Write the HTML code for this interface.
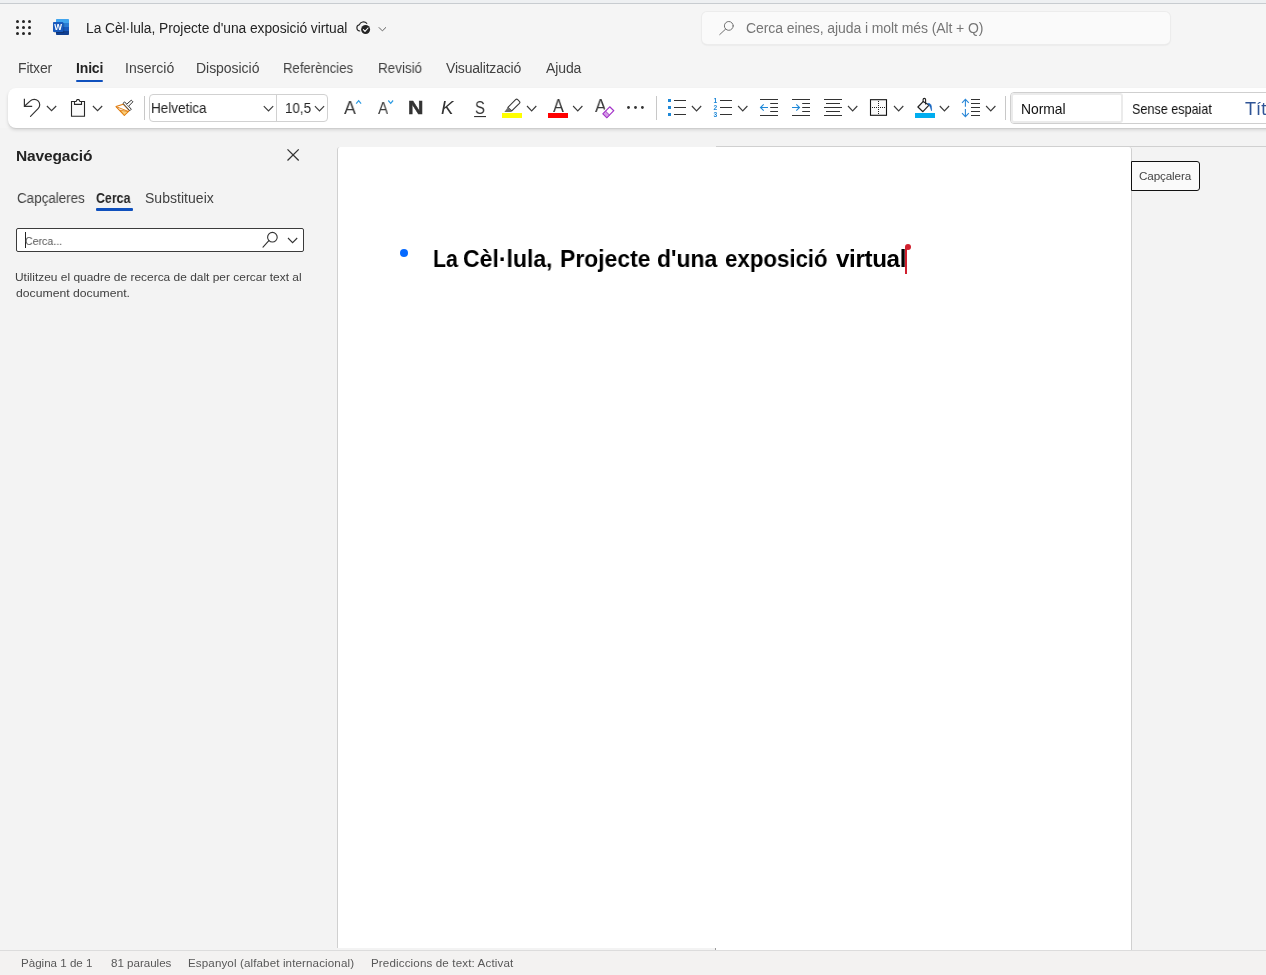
<!DOCTYPE html>
<html lang="ca">
<head>
<meta charset="utf-8">
<title>La Cèl·lula, Projecte d'una exposició virtual</title>
<style>
*{box-sizing:border-box;margin:0;padding:0}
html,body{width:1266px;height:975px;overflow:hidden;background:#f5f5f5;font-family:"Liberation Sans",sans-serif;color:#242424}
.abs{position:absolute}
.t{position:absolute;white-space:nowrap;line-height:1;will-change:transform}
svg{position:absolute;overflow:visible;will-change:transform;z-index:2}
#topstrip{left:0;top:0;width:1266px;height:3px;background:#eef0f2}
#topline{left:0;top:3px;width:1266px;height:1px;background:#c8ccd0}
#search{left:702px;top:12px;width:468px;height:32px;background:#fafafa;border-radius:5px;box-shadow:0 0 0 1px #ececec,0 1px 2px rgba(0,0,0,.12)}
#ribbon{left:8px;top:88px;width:1300px;height:40px;background:#fff;border-radius:8px;box-shadow:0 2px 3.6px rgba(0,0,0,.13),0 1px 1px rgba(0,0,0,.06)}
#work{left:0;top:128px;width:1266px;height:822px;background:#f3f3f3}
#pgline{left:716px;top:146px;width:550px;height:1px;background:#d0d0d0}
#page{left:337px;top:147px;width:795px;height:803px;background:#fff;border-left:1px solid #d0d0d0;border-right:1px solid #d0d0d0;border-top-left-radius:3px;border-top-right-radius:3px}
#hband{left:337px;top:948px;width:379px;height:2px;background:#f3f3f3;border-right:1px solid #9a9a9a}
#sline{left:0;top:950px;width:1266px;height:1px;background:#dcdcdc}
#status{left:0;top:951px;width:1266px;height:24px;background:#f3f2f1}
#tabul{left:76px;top:80px;width:27px;height:2px;background:#0f50bd;border-radius:1px}
#navul{left:96px;top:208px;width:37px;height:3px;background:#0f50bd;border-radius:1px}
#fbox{left:149px;top:94px;width:179px;height:28px;border:1px solid #d1d1d1;border-radius:4px;background:#fff}
#fdiv{left:276px;top:95px;width:1px;height:26px;background:#d1d1d1}
.sep{width:1px;height:24px;top:96px;background:#c8c8c8}
#gal{left:1010px;top:92px;width:300px;height:32px;border:1px solid #cfcfcf;border-radius:4px;background:#fff}
#galsel{left:1011px;top:93px;width:112px;height:30px;border:2px solid #ebebeb;border-radius:3px;background:#fff}
#ninput{left:16px;top:228px;width:288px;height:24px;border:1px solid #3b3b3b;border-radius:2px;background:#fff}
#ncaret{left:25px;top:232px;width:1px;height:16px;background:#222}
#capbox{left:1131px;top:161px;width:69px;height:30px;border:1px solid #111;border-left:1px solid #111;border-radius:0 3px 3px 0;background:#fafafa}
#bullet{left:400px;top:248.900px;width:8.100px;height:8.100px;border-radius:50%;background:#0469ff}
#cur{left:904.9px;top:247px;width:1.7px;height:26.700px;background:#d0202f}
#curdot{left:905px;top:244px;width:6px;height:6px;border-radius:50%;background:#d0202f}
</style>
</head>
<body>
<div class="abs" id="topstrip"></div>
<div class="abs" id="topline"></div>
<div class="abs" id="search"></div>
<div class="abs" id="tabul"></div>
<div class="abs" id="work"></div>
<div class="abs" id="ribbon"></div>
<div class="abs" id="fbox"></div>
<div class="abs" id="fdiv"></div>
<div class="abs sep" style="left:144px"></div>
<div class="abs sep" style="left:656px"></div>
<div class="abs sep" style="left:1005px"></div>
<div class="abs" id="gal"></div>
<div class="abs" id="galsel"></div>
<div class="abs" id="pgline"></div>
<div class="abs" id="page"></div>
<div class="abs" id="hband"></div>
<div class="abs" id="sline"></div>
<div class="abs" id="status"></div>
<div class="abs" id="navul"></div>
<div class="abs" id="ninput"></div>
<div class="abs" id="ncaret"></div>
<div class="abs" id="capbox"></div>
<div class="abs" id="bullet"></div>
<div class="abs" id="cur"></div>
<div class="abs" id="curdot"></div>

<svg width="1266" height="975" viewBox="0 0 1266 975" style="left:0;top:0" fill="none">
<!-- app launcher -->
<g fill="#242424">
<circle cx="17.5" cy="21.5" r="1.5"/><circle cx="23.5" cy="21.5" r="1.5"/><circle cx="29.5" cy="21.5" r="1.5"/>
<circle cx="17.5" cy="27.5" r="1.5"/><circle cx="23.5" cy="27.5" r="1.5"/><circle cx="29.5" cy="27.5" r="1.5"/>
<circle cx="17.5" cy="33.5" r="1.5"/><circle cx="23.5" cy="33.5" r="1.5"/><circle cx="29.5" cy="33.5" r="1.5"/>
</g>
<!-- word icon -->
<g>
<path d="M57 19h11.2a.8.8 0 0 1 .8.8V23H56v-3.200a.8.800 0 0 1 1-.8z" fill="#41a5ee"/>
<rect x="56" y="23" width="13" height="4" fill="#2b7cd3"/>
<rect x="56" y="27" width="13" height="4" fill="#185abd"/>
<path d="M56 31h13v3.200a.8.800 0 0 1-.8.800H56.800a.8.800 0 0 1-.8-.8z" fill="#103f91"/>
<rect x="54" y="23" width="10.300" height="10" rx=".8" fill="#000" opacity=".18"/>
<rect x="53" y="22" width="10.300" height="10" rx=".8" fill="#185abd"/>
<text x="58.150" y="30.200" font-family="Liberation Sans, sans-serif" font-weight="700" font-size="8.200" fill="#fff" text-anchor="middle">W</text>
</g>
<!-- cloud saved -->
<g stroke="#242424" stroke-width="1.100" stroke-linecap="round">
<path d="M366.800 23.300A4.500 4.500 0 0 0 359.300 24.700A3.200 3.200 0 0 0 359.800 31"/>
</g>
<circle cx="365.600" cy="29.500" r="4.500" fill="#242424"/>
<path d="M363.400 29.700l1.600 1.600l3-3.300" stroke="#fff" stroke-width="1.100" stroke-linecap="round" stroke-linejoin="round"/>
<path d="M378.800 27.300l3.600 3.600l3.600-3.600" stroke="#616161" stroke-width="1" />
<!-- header search icon -->
<g stroke="#707070" stroke-width="1" stroke-linecap="round">
<circle cx="728.800" cy="25.900" r="4.400"/>
<path d="M725.600 29.100L719.700 34.600"/>
</g>
<!-- chevrons ribbon -->
<g stroke="#3b3b3b" stroke-width="1.150">
<path d="M46.900 106l4.650 4.700l4.650-4.700"/>
<path d="M92.900 106l4.650 4.700l4.650-4.700"/>
<path d="M263.800 106.200l4.700 4.800l4.700-4.800"/>
<path d="M314.900 106.200l4.600 4.800l4.600-4.800"/>
<path d="M527 106l4.650 4.800l4.650-4.800"/>
<path d="M573.100 106l4.650 4.800l4.650-4.800"/>
<path d="M691.900 106l4.650 4.800l4.650-4.800"/>
<path d="M738.100 106l4.650 4.800l4.650-4.800"/>
<path d="M848 106l4.650 4.800l4.650-4.800"/>
<path d="M894 106l4.650 4.800l4.650-4.800"/>
<path d="M939.800 106l4.650 4.800l4.650-4.800"/>
<path d="M986.100 106l4.650 4.800l4.650-4.800"/>
</g>
<!-- undo -->
<g stroke="#333" stroke-width="1.200" stroke-linecap="square">
<path d="M24.400 99.300V106.400H31.600"/>
<path d="M25 105.800L30.300 100.900A5.500 5.500 0 0 1 38.100 108.700L30.500 116.300" stroke-linecap="round"/>
</g>
<!-- clipboard -->
<g stroke="#262626" stroke-width="1.100" stroke-linejoin="miter">
<path d="M74.500 101.500H71.500V116.200H84.500V101.500H81.500" fill="#fafafa"/>
<path d="M74.500 104.400V101.500H76.100L77.100 99.600H78.900L79.900 101.500H81.500V104.400Z" fill="#fff"/>
</g>
<!-- format painter -->
<path d="M116 106.600L123.200 104.200L129.300 110.600L124.300 115.300Z" fill="#fff" stroke="#e07b0c" stroke-width="1.100" stroke-linejoin="round"/>
<path d="M120.200 110.200L128.400 111.500L124.300 115.200Z" fill="#f9cf7a" stroke="#e07b0c" stroke-width=".8" stroke-linejoin="round"/>
<path d="M116.300 106.700L128.200 111.400" stroke="#e07b0c" stroke-width=".9"/>
<path d="M123 103.400L124.600 101.900L131.300 109.200L129.800 110.700Z" fill="#fff" stroke="#333" stroke-width="1" stroke-linejoin="round"/>
<path d="M126.700 104.200L131.300 100.200L132.900 101.800L128.600 106.200" fill="#fff" stroke="#333" stroke-width="1" stroke-linejoin="round"/>
<!-- grow / shrink font carets -->
<path d="M356.200 103.700l2.450-3l2.450 3" stroke="#2b9be3" stroke-width="1.200"/>
<path d="M388.300 100.500l2.400 2.900l2.400-2.900" stroke="#2b9be3" stroke-width="1.200"/>
<!-- underline S line -->
<rect x="474.100" y="116" width="11.900" height="1.100" fill="#333"/>
<!-- highlighter -->
<rect x="502" y="113" width="20" height="5" fill="#ffff00"/>
<path d="M507.900 107.300L515.600 99.700A1.500 1.500 0 0 1 517.700 99.700L519.400 101.300A1.500 1.500 0 0 1 519.400 103.400L511.700 110.900Z" stroke="#3b3b3b" stroke-width="1.100" fill="#fff"/>
<path d="M507.800 107.200L511.700 110.900L510.800 111.900H504.400Z" fill="#6e6e6e"/>
<!-- font colour -->
<rect x="548" y="113" width="20" height="5" fill="#ff0000"/>
<!-- clear formatting eraser -->
<path d="M609.700 106.800L613.800 110.700L606.900 117.700L602.900 113.800Z" fill="#fff" stroke="#fff" stroke-width="3.400" stroke-linejoin="round"/>
<path d="M609.700 106.800L613.800 110.700L606.900 117.700L602.900 113.800Z" fill="#fff" stroke="#a333c8" stroke-width="1.200" stroke-linejoin="round"/>
<path d="M605.600 111.200L609.500 115L606.900 117.600L603 113.800Z" fill="#d49be6" stroke="#a333c8" stroke-width="1"/>
<!-- more dots -->
<g fill="#333"><circle cx="628.500" cy="107.500" r="1.400"/><circle cx="635.500" cy="107.500" r="1.400"/><circle cx="642.400" cy="107.500" r="1.400"/></g>
<!-- bullets -->
<g fill="#1e88d8"><rect x="668" y="99" width="3" height="3"/><rect x="668" y="106" width="3" height="3"/><rect x="668" y="113" width="3" height="3"/></g>
<g stroke="#333" stroke-width="1.100"><path d="M674 100.500H686M674 107.500H686M674 114.500H686"/></g>
<!-- numbering -->
<g font-family="Liberation Sans, sans-serif" font-weight="700" font-size="6.700" fill="#1e88d8"><text x="713.600" y="102.900">1</text><text x="713.600" y="109.900">2</text><text x="713.600" y="116.900">3</text></g>
<g stroke="#333" stroke-width="1.100"><path d="M720 100.500H732M720 107.500H732M720 114.500H732"/></g>
<!-- outdent -->
<g stroke="#333" stroke-width="1.100"><path d="M760 99.500H778M770.200 103.500H778M770.200 107.500H778M770.200 111.500H778M760 115.500H778"/></g>
<path d="M768 107.500H760.600M763.700 104.300L760.500 107.500L763.700 110.700" stroke="#1e88d8" stroke-width="1.100"/>
<!-- indent -->
<g stroke="#333" stroke-width="1.100"><path d="M792 99.500H810M802.200 103.500H810M802.200 107.500H810M802.200 111.500H810M792 115.500H810"/></g>
<path d="M792 107.500H799.400M796.300 104.300L799.500 107.500L796.300 110.700" stroke="#1e88d8" stroke-width="1.100"/>
<!-- align -->
<g stroke="#333" stroke-width="1.100"><path d="M824 99.500H842M826 103.500H840M824 107.500H842M826 111.500H840M824 115.500H842"/></g>
<!-- borders -->
<rect x="870.500" y="99.700" width="16" height="15.600" stroke="#111" stroke-width="1.100" fill="#fafafa"/>
<path d="M878.500 101V114.500M872 107.500H885.500" stroke="#222" stroke-width="1" stroke-dasharray="1 1"/>
<!-- shading -->
<rect x="915" y="113" width="20" height="5" fill="#00adef"/>
<path d="M917.900 107L923.100 101.600L929 105.100L922.900 111.700Z" fill="#fafafa" stroke="#222" stroke-width="1.200" stroke-linejoin="round"/>
<path d="M923.100 101.900V99.600A1.250 1.250 0 0 1 925.600 99.600V104.500" stroke="#222" stroke-width="1.100"/>
<path d="M927.600 103.600C930.800 102.600 931.900 105.500 931.500 110.800C930.600 108.200 930.200 105.600 927.600 103.600Z" fill="#1565c0" stroke="#1565c0" stroke-width=".6"/>
<!-- line spacing -->
<g stroke="#2b88d8" stroke-width="1.100"><path d="M965.400 99.300V106.800M962 102.800L965.400 99.300L968.800 102.800M965.400 109V116.600M962 113.100L965.400 116.600L968.800 113.100"/></g>
<g stroke="#333" stroke-width="1.100"><path d="M971 99.500H980M971 103.500H980M971 107.500H980M971 111.500H980M971 115.500H980"/></g>
<!-- nav close -->
<path d="M287.500 149.400L298.700 160.500M298.700 149.400L287.500 160.500" stroke="#333" stroke-width="1.300"/>
<!-- nav search icon -->
<g stroke="#333" stroke-width="1.100" stroke-linecap="round"><circle cx="272.400" cy="237.200" r="4.800"/><path d="M268.900 240.700L263 247.200"/></g>
<path d="M288 238l4.600 4.700l4.600-4.700" stroke="#333" stroke-width="1.100"/>
</svg>

<div class="t" id="title" style="left:85.60px;top:22.4px;font-size:13.8px;font-weight:400;color:#242424;letter-spacing:-0.045px;">La Cèl·lula, Projecte d'una exposició virtual</div>
<div class="t" id="sph" style="left:746.00px;top:20.7px;font-size:14px;font-weight:400;color:#767676;letter-spacing:-0.089px;">Cerca eines, ajuda i molt més (Alt + Q)</div>
<div class="t" id="tb1" style="left:18.00px;top:60.9px;font-size:14px;font-weight:400;color:#424242;letter-spacing:-0.152px;">Fitxer</div>
<div class="t" id="tb2" style="left:76.40px;top:60.9px;font-size:14px;font-weight:700;color:#242424;letter-spacing:-0.156px;">Inici</div>
<div class="t" id="tb3" style="left:124.80px;top:60.9px;font-size:14px;font-weight:400;color:#424242;letter-spacing:0.032px;">Inserció</div>
<div class="t" id="tb4" style="left:196.20px;top:60.9px;font-size:14px;font-weight:400;color:#424242;letter-spacing:-0.043px;">Disposició</div>
<div class="t" id="tb5" style="left:283.20px;top:60.9px;font-size:14px;font-weight:400;color:#424242;letter-spacing:0.000px;transform:scaleX(0.9372);transform-origin:0 0;">Referències</div>
<div class="t" id="tb6" style="left:378.10px;top:60.9px;font-size:14px;font-weight:400;color:#424242;letter-spacing:0.000px;transform:scaleX(0.9607);transform-origin:0 0;">Revisió</div>
<div class="t" id="tb7" style="left:445.70px;top:60.9px;font-size:14px;font-weight:400;color:#424242;letter-spacing:-0.189px;">Visualització</div>
<div class="t" id="tb8" style="left:545.50px;top:60.9px;font-size:14px;font-weight:400;color:#424242;letter-spacing:-0.103px;">Ajuda</div>
<div class="t" id="fname" style="left:150.90px;top:100.8px;font-size:14px;font-weight:400;color:#242424;letter-spacing:0.000px;transform:scaleX(0.9654);transform-origin:0 0;">Helvetica</div>
<div class="t" id="fsize" style="left:285.20px;top:100.8px;font-size:14px;font-weight:400;color:#242424;letter-spacing:0.000px;transform:scaleX(0.9577);transform-origin:0 0;">10,5</div>
<div class="t" id="stn" style="left:1020.80px;top:103.4px;font-size:13.9px;font-weight:400;color:#111;letter-spacing:-0.059px;">Normal</div>
<div class="t" id="sts" style="left:1131.90px;top:103.4px;font-size:13.9px;font-weight:400;color:#111;letter-spacing:0.000px;transform:scaleX(0.9064);transform-origin:0 0;">Sense espaiat</div>
<div class="t" id="stt" style="left:1245.30px;top:101.1px;font-size:17.6px;font-weight:400;color:#2f5496;letter-spacing:0.000px;transform:scaleX(1.0326);transform-origin:0 0;">Tít</div>
<div class="t" id="navh" style="left:15.80px;top:147.9px;font-size:15.5px;font-weight:700;color:#242424;letter-spacing:-0.141px;">Navegació</div>
<div class="t" id="nt1" style="left:17.10px;top:190.6px;font-size:14px;font-weight:400;color:#424242;letter-spacing:0.000px;transform:scaleX(0.9576);transform-origin:0 0;">Capçaleres</div>
<div class="t" id="nt2" style="left:96.40px;top:190.6px;font-size:14px;font-weight:700;color:#242424;letter-spacing:0.000px;transform:scaleX(0.8838);transform-origin:0 0;">Cerca</div>
<div class="t" id="nt3" style="left:144.80px;top:190.6px;font-size:14px;font-weight:400;color:#424242;letter-spacing:0.034px;">Substitueix</div>
<div class="t" id="nph" style="left:25.40px;top:234.8px;font-size:11.7px;font-weight:400;color:#585858;letter-spacing:0.000px;transform:scaleX(0.9058);transform-origin:0 0;">Cerca...</div>
<div class="t" id="nh1" style="left:15.00px;top:271.7px;font-size:11.4px;font-weight:400;color:#404040;letter-spacing:0.000px;transform:scaleX(1.0479);transform-origin:0 0;">Utilitzeu el quadre de recerca de dalt per cercar text al</div>
<div class="t" id="nh2" style="left:15.70px;top:287.8px;font-size:11.4px;font-weight:400;color:#404040;letter-spacing:0.000px;transform:scaleX(1.0716);transform-origin:0 0;">document document.</div>
<div class="t" id="cap" style="left:1139.10px;top:170.2px;font-size:11.7px;font-weight:400;color:#444;letter-spacing:-0.132px;">Capçalera</div>
<div class="t" id="s1" style="left:20.80px;top:957.1px;font-size:11.6px;font-weight:400;color:#585858;letter-spacing:-0.012px;">Pàgina 1 de 1</div>
<div class="t" id="s2" style="left:110.50px;top:957.1px;font-size:11.6px;font-weight:400;color:#585858;letter-spacing:-0.019px;">81 paraules</div>
<div class="t" id="s3" style="left:188.20px;top:957.1px;font-size:11.6px;font-weight:400;color:#585858;letter-spacing:0.116px;">Espanyol (alfabet internacional)</div>
<div class="t" id="s4" style="left:371.00px;top:957.1px;font-size:11.6px;font-weight:400;color:#585858;letter-spacing:0.135px;">Prediccions de text: Activat</div>
<div class="t" id="gA" style="left:343.60px;top:97.8px;font-size:19.2px;font-weight:400;color:#3b3b3b;letter-spacing:0.000px;transform:scaleX(.93);transform-origin:0 0;">A</div>
<div class="t" id="gA2" style="left:377.50px;top:100.5px;font-size:16px;font-weight:400;color:#3b3b3b;letter-spacing:0.000px;transform:scaleX(.95);transform-origin:0 0;">A</div>
<div class="t" id="gN" style="left:408.00px;top:98.5px;font-size:18.4px;font-weight:700;color:#333;letter-spacing:0.000px;-webkit-text-stroke:0.5px #333;transform:scaleX(1.16);transform-origin:0 0;">N</div>
<div class="t" id="gK" style="left:441.20px;top:98.7px;font-size:18.4px;font-weight:400;color:#333;letter-spacing:0.000px;font-style:italic;transform:scaleX(1.02);transform-origin:0 0;">K</div>
<div class="t" id="gS" style="left:475.10px;top:98.7px;font-size:18.6px;font-weight:400;color:#333;letter-spacing:0.000px;transform:scaleX(.8);transform-origin:0 0;">S</div>
<div class="t" id="gAc" style="left:552.60px;top:96.8px;font-size:18px;font-weight:400;color:#3b3b3b;letter-spacing:0.000px;transform:scaleX(.9);transform-origin:0 0;">A</div>
<div class="t" id="gAe" style="left:595.00px;top:95.9px;font-size:19.2px;font-weight:400;color:#3b3b3b;letter-spacing:0.000px;transform:scaleX(.88);transform-origin:0 0;">A</div>
<h1 id="h1" style="position:absolute;left:0;top:0;font-size:inherit;font-weight:inherit"><span class="t" id="h1a" style="left:433.20px;top:247.2px;font-size:24.2px;font-weight:700;color:#000;letter-spacing:0.000px;transform:scaleX(0.8801);transform-origin:0 0;">La</span> <span class="t" id="h1b" style="left:463.20px;top:247.2px;font-size:24.2px;font-weight:700;color:#000;letter-spacing:0.000px;transform:scaleX(0.951);transform-origin:0 0;">Cèl·lula,</span> <span class="t" id="h1c" style="left:559.60px;top:247.2px;font-size:24.2px;font-weight:700;color:#000;letter-spacing:0.000px;transform:scaleX(0.9474);transform-origin:0 0;">Projecte</span> <span class="t" id="h1d" style="left:657.20px;top:247.2px;font-size:24.2px;font-weight:700;color:#000;letter-spacing:0.000px;transform:scaleX(0.9494);transform-origin:0 0;">d'una</span> <span class="t" id="h1e" style="left:725.10px;top:247.2px;font-size:24.2px;font-weight:700;color:#000;letter-spacing:0.000px;transform:scaleX(0.9197);transform-origin:0 0;">exposició</span> <span class="t" id="h1f" style="left:835.50px;top:247.2px;font-size:24.2px;font-weight:700;color:#000;letter-spacing:-0.358px;">virtual</span></h1>
</body>
</html>
